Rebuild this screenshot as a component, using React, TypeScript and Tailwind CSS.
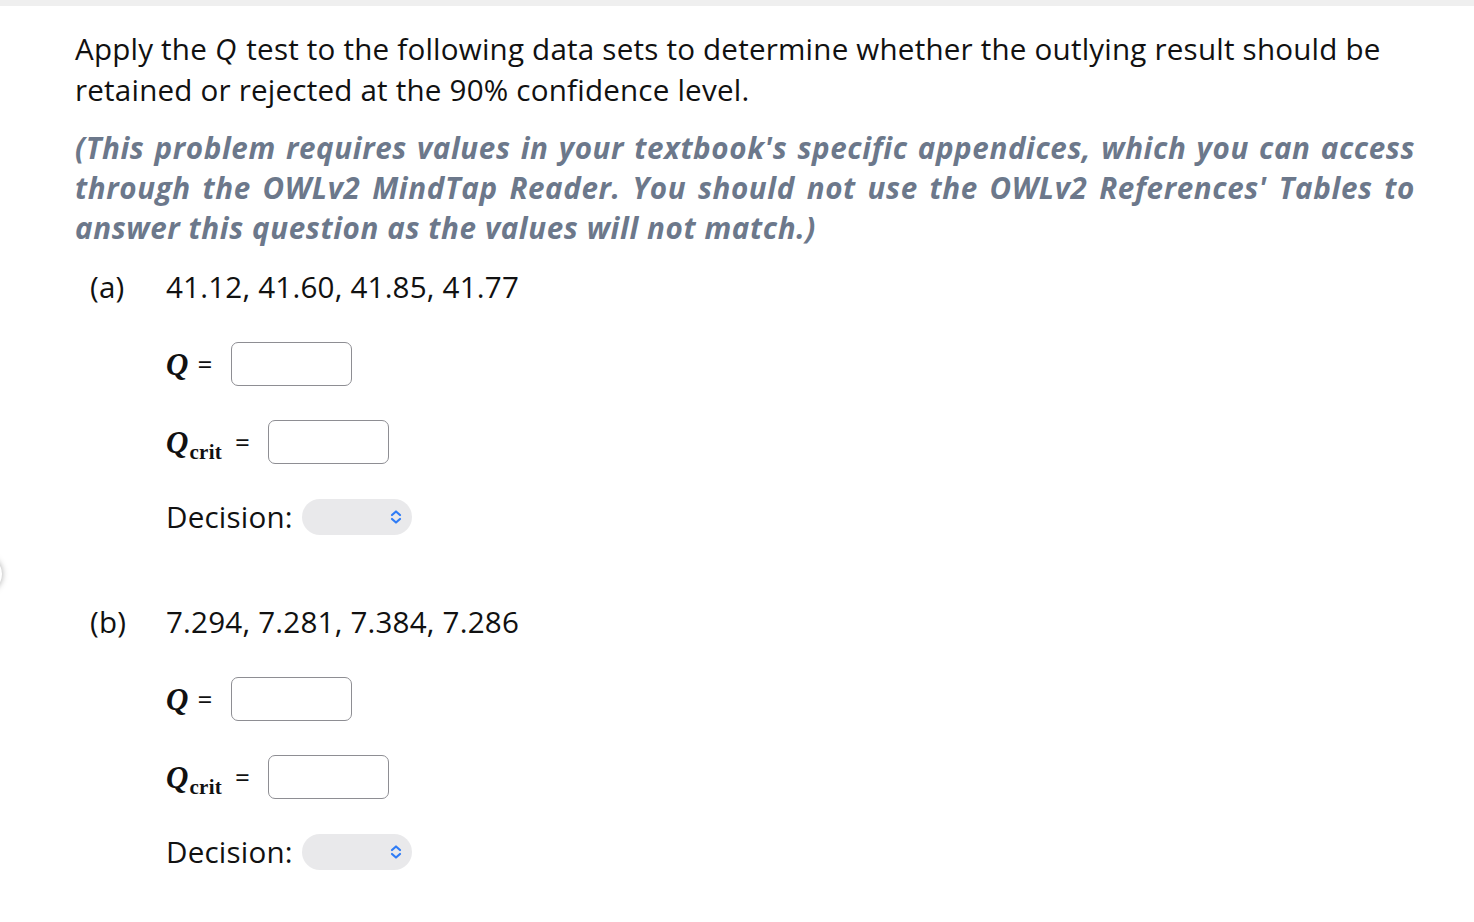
import { ReactNode } from 'react'

function QSym({ sub }: { sub?: boolean }) {
  return (
    <span className="inline-flex items-baseline" style={{ fontFamily: '"Liberation Serif", "DejaVu Serif", serif' }}>
      <span className="italic font-bold text-[31px] leading-none">Q</span>
      {sub && <span className="font-bold text-[21px] leading-none translate-y-[6px] ml-[1px]">crit</span>}
    </span>
  )
}

function AnswerBox() {
  return <div className="w-[121px] h-[44px] rounded-[7px] border-[1.5px] border-[#8e8e93] bg-white" />
}

function DecisionSelect() {
  return (
    <div className="w-[110px] h-9 rounded-full bg-[#e9e9eb] flex items-center justify-end pr-[9px]">
      <svg width="14" height="16" viewBox="0 0 14 16" fill="none" stroke="#2f7cf6" strokeWidth="2.2" strokeLinecap="round" strokeLinejoin="round">
        <path d="M3 6 L7 2.5 L11 6" />
        <path d="M3 10 L7 13.5 L11 10" />
      </svg>
    </div>
  )
}

function Part({ label, data }: { label: string; data: ReactNode }) {
  return (
    <div className="flex flex-col">
      <div className="flex items-center h-10 pl-[15px]">
        <span className="w-[76px]">{label}</span>
        <span>{data}</span>
      </div>
      <div className="pl-[91px] flex flex-col">
        <div className="flex items-center h-[44px] mt-[35px]">
          <QSym />
          <span className="ml-[9px] mr-[18px] text-[26px]">=</span>
          <AnswerBox />
        </div>
        <div className="flex items-center h-[44px] mt-[34px]">
          <QSym sub />
          <span className="ml-[13px] mr-[18px] text-[26px]">=</span>
          <AnswerBox />
        </div>
        <div className="flex items-center h-9 mt-[35px]">
          <span className="mr-[9px]">Decision:</span>
          <DecisionSelect />
        </div>
      </div>
    </div>
  )
}

export default function App() {
  return (
    <div className="relative min-h-[922px] bg-white overflow-hidden text-[#111] text-[29.6px] tracking-[0.2px]" style={{ fontFamily: '"Open Sans", "Noto Sans", sans-serif' }}>
      <div className="h-[6px] bg-[#efefef]" />
      {/* edge widget peeking in from the left */}
      <div className="absolute left-[-34px] top-[556px] w-9 h-9 rounded-full bg-white shadow-[0_0_6px_rgba(0,0,0,0.35)]" />
      <div className="pl-[75px] pt-[22px] w-[1415px]">
        <p className="leading-[41px]">
          Apply the <i className="pr-[2px]">Q</i> test to the following data sets to determine whether the outlying result should be retained or rejected at the 90% confidence level.
        </p>
        <p className="mt-[18px] leading-[40px] italic font-bold text-[#6c788b] text-justify tracking-[0.6px]">
          (This problem requires values in your textbook's specific appendices, which you can access through the OWLv2 MindTap Reader. You should not use the OWLv2 References' Tables to answer this question as the values will not match.)
        </p>
        <div className="mt-[19px]">
          <Part label="(a)" data="41.12, 41.60, 41.85, 41.77" />
        </div>
        <div className="mt-[67px]">
          <Part label="(b)" data="7.294, 7.281, 7.384, 7.286" />
        </div>
      </div>
    </div>
  )
}
